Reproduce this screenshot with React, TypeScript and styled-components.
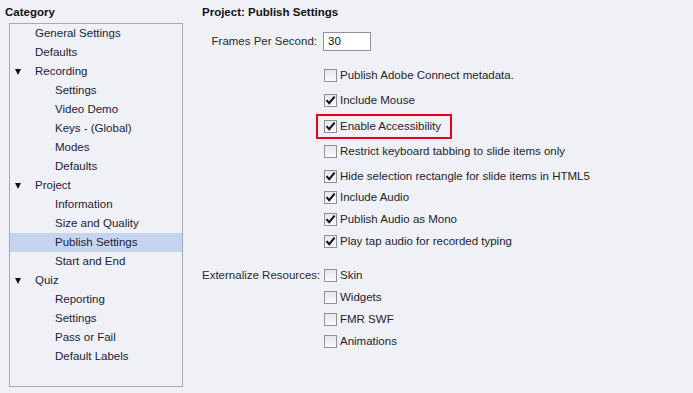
import React, { type FC } from 'react'
import styled, { createGlobalStyle } from 'styled-components'

const GlobalStyle = createGlobalStyle`
  html, body {
    margin: 0;
    padding: 0;
    background: #eff1f6;
  }
  body {
    font-family: "Liberation Sans", Arial, sans-serif;
    font-size: 11.5px;
    color: #1e1e2e;
  }
`

interface TreeItem {
  label: string
  level: number
  expander?: boolean
  selected?: boolean
}

const treeItems: TreeItem[] = [
  { label: 'General Settings', level: 1 },
  { label: 'Defaults', level: 1 },
  { label: 'Recording', level: 1, expander: true },
  { label: 'Settings', level: 2 },
  { label: 'Video Demo', level: 2 },
  { label: 'Keys - (Global)', level: 2 },
  { label: 'Modes', level: 2 },
  { label: 'Defaults', level: 2 },
  { label: 'Project', level: 1, expander: true },
  { label: 'Information', level: 2 },
  { label: 'Size and Quality', level: 2 },
  { label: 'Publish Settings', level: 2, selected: true },
  { label: 'Start and End', level: 2 },
  { label: 'Quiz', level: 1, expander: true },
  { label: 'Reporting', level: 2 },
  { label: 'Settings', level: 2 },
  { label: 'Pass or Fail', level: 2 },
  { label: 'Default Labels', level: 2 }
]

interface Option {
  label: string
  checked: boolean
  before?: number
  height?: number
  highlighted?: boolean
}

const publishOptions: Option[] = [
  { label: 'Publish Adobe Connect metadata.', checked: false },
  { label: 'Include Mouse', checked: true, before: 3 },
  { label: 'Enable Accessibility', checked: true, before: 4, highlighted: true },
  { label: 'Restrict keyboard tabbing to slide items only', checked: false, before: 3 },
  { label: 'Hide selection rectangle for slide items in HTML5', checked: true, before: 4, height: 20 },
  { label: 'Include Audio', checked: true },
  { label: 'Publish Audio as Mono', checked: true },
  { label: 'Play tap audio for recorded typing', checked: true }
]

const resources = ['Skin', 'Widgets', 'FMR SWF', 'Animations']

const CheckBox: FC<{ checked: boolean }> = ({ checked }) => (
  <Box>
    {checked && (
      <svg width="11" height="11" viewBox="0 0 11 11">
        <path d="M1.5 5.2 L4.2 8.2 L9.6 1.6" fill="none" stroke="#111" strokeWidth="2" />
      </svg>
    )}
  </Box>
)

const App: FC = () => {
  return <>
    <GlobalStyle />
    <Page>
      <Sidebar>
        <Heading>Category</Heading>
        <Tree>
          {treeItems.map((item, i) => (
            <TreeRow key={i} $level={item.level} $selected={item.selected}>
              {item.expander && <Expander />}
              {item.label}
            </TreeRow>
          ))}
        </Tree>
      </Sidebar>
      <Main>
        <Heading>Project: Publish Settings</Heading>
        <FieldRow>
          <FieldLabel>Frames Per Second:</FieldLabel>
          <TextBox>30</TextBox>
        </FieldRow>
        <OptionList>
          {publishOptions.map(opt => (
            <OptionRow key={opt.label} $before={opt.before} $height={opt.height}>
              <OptionInner $highlighted={opt.highlighted}>
                <CheckBox checked={opt.checked} />
                <span>{opt.label}</span>
              </OptionInner>
            </OptionRow>
          ))}
        </OptionList>
        <ResourceGroup>
          <FieldLabel>Externalize Resources:</FieldLabel>
          <ResourceList>
            {resources.map(r => (
              <OptionRow key={r}>
                <OptionInner>
                  <CheckBox checked={false} />
                  <span>{r}</span>
                </OptionInner>
              </OptionRow>
            ))}
          </ResourceList>
        </ResourceGroup>
      </Main>
    </Page>
  </>
}

const Page = styled.div`
  display: flex;
  width: 693px;
  height: 393px;
  overflow: hidden;
`

const Sidebar = styled.div`
  width: 184px;
  display: flex;
  flex-direction: column;
  padding-left: 5px;
  box-sizing: border-box;
`

const Heading = styled.div`
  font-weight: bold;
  height: 23px;
  line-height: 24px;
  color: #111;
`

const Tree = styled.div`
  margin-left: 4px;
  width: 174px;
  height: 364px;
  box-sizing: border-box;
  border: 1px solid #a3a7b7;
  background: #eff1f6;
`

const TreeRow = styled.div<{ $level: number, $selected?: boolean }>`
  position: relative;
  height: 19px;
  line-height: 19px;
  padding-left: ${p => p.$level === 1 ? 25 : 45}px;
  background: ${p => p.$selected ? '#c5d4ef' : 'transparent'};
  color: #1c1c3a;
  white-space: nowrap;
`

const Expander = styled.span`
  position: absolute;
  left: 5px;
  top: 7px;
  width: 0;
  height: 0;
  border-left: 3.5px solid transparent;
  border-right: 3.5px solid transparent;
  border-top: 6px solid #111;
`

const Main = styled.div`
  flex: 1;
  padding-left: 18px;
`

const FieldRow = styled.div`
  display: flex;
  align-items: center;
  height: 36px;
`

const FieldLabel = styled.div`
  width: 121px;
  text-align: right;
  padding-right: 6px;
  color: #2a2a2a;
  box-sizing: border-box;
  white-space: nowrap;
  line-height: 22px;
`

const TextBox = styled.div`
  width: 42px;
  height: 17px;
  border: 1px solid #8e91a0;
  background: #fff;
  padding-left: 4px;
  line-height: 17px;
  color: #111;
`

const OptionList = styled.div`
  margin-top: 5px;
  margin-left: 120px;
`

const OptionRow = styled.div<{ $before?: number, $height?: number }>`
  margin-top: ${p => p.$before ?? 0}px;
  height: ${p => p.$height ?? 22}px;
  display: flex;
  align-items: center;
`

const OptionInner = styled.div<{ $highlighted?: boolean }>`
  display: flex;
  align-items: center;
  gap: 3px;
  margin-left: ${p => p.$highlighted ? -6 : 0}px;
  padding: ${p => p.$highlighted ? '4px 9px 4px 4px' : '0'};
  border: ${p => p.$highlighted ? '2px solid #e3001b' : 'none'};
  color: #1e1e2e;
  white-space: nowrap;
`

const Box = styled.span`
  width: 11px;
  height: 11px;
  border: 1px solid #8d909e;
  background: linear-gradient(#e6e7ec, #fbfbfc);
  display: inline-flex;
  align-items: center;
  justify-content: center;
  flex-shrink: 0;
  margin-left: 2px;
`

const ResourceGroup = styled.div`
  display: flex;
  align-items: flex-start;
  margin-top: 12px;
`

const ResourceList = styled.div`
  display: flex;
  flex-direction: column;
  margin-left: -1px;
`

export default App
